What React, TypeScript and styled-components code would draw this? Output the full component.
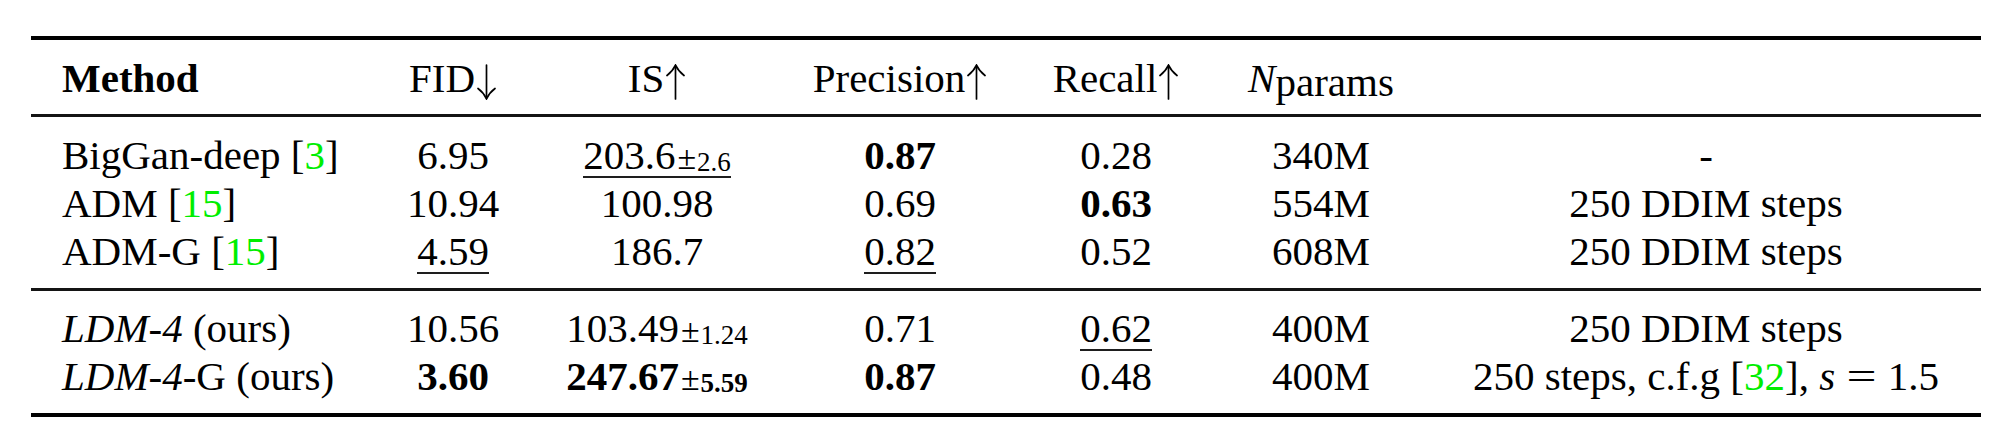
import React from 'react';
import styled, { createGlobalStyle } from 'styled-components';

const COLUMNS = '340px 164px 244px 242px 190px 220px 550px';
const SERIF = "'Liberation Serif', 'Times New Roman', Tinos, 'DejaVu Serif', serif";

const GlobalStyle = createGlobalStyle`
  html, body {
    margin: 0;
    padding: 0;
    background: #ffffff;
  }
  body {
    font-family: ${SERIF};
    color: #000000;
  }
`;

const Page = styled.div`
  padding: 36px 0 0 31px;
`;

const Table = styled.div`
  width: 1950px;
  display: flex;
  flex-direction: column;
  font-family: ${SERIF};
  color: #000000;
`;

const Rule = styled.div<{ $heavy?: boolean }>`
  height: ${(p) => (p.$heavy ? 4 : 3)}px;
  background: ${(p) => (p.$heavy ? '#000000' : '#141414')};
`;

const Group = styled.div<{ $top: number; $bottom: number }>`
  padding: ${(p) => p.$top}px 0 ${(p) => p.$bottom}px;
`;

const Row = styled.div`
  display: grid;
  grid-template-columns: ${COLUMNS};
  height: 48px;
  font-family: ${SERIF};
  font-size: 41px;
  line-height: 48px;
  white-space: nowrap;
`;

const Cell = styled.div<{ $left?: boolean }>`
  text-align: ${(p) => (p.$left ? 'left' : 'center')};
  padding-left: ${(p) => (p.$left ? 31 : 0)}px;
`;

const Bold = styled.span`
  font-weight: 700;
`;

const Italic = styled.span`
  font-style: italic;
`;

const Cite = styled.span`
  color: #00ee00;
`;

const ArrowSvg = styled.svg`
  display: inline-block;
  width: 21px;
  height: 36px;
  margin-left: 1px;
  vertical-align: -8px;
`;

const Sub = styled.span`
  display: inline-block;
  vertical-align: -4px;
  line-height: 1;
`;

const Marked = styled.span`
  display: inline-block;
  line-height: 41px;
  border-bottom: 2px solid #1e1e1e;
`;

const Spread = styled.span<{ $bold?: boolean }>`
  font-size: 27px;
  line-height: 1;
  vertical-align: -2px;
  font-weight: ${(p) => (p.$bold ? 700 : 400)};
`;

const PlusMinus = styled.span`
  display: inline-block;
  font-size: 34px;
  font-weight: 400;
  line-height: 1;
  margin: 0 1px 0 2px;
`;

const Equals = styled.span`
  display: inline-block;
  margin: 0 0.36em;
  transform: scaleX(1.3);
`;

// math-style arrow: thin stem, curved barbs
const Arrow: React.FC<{ down?: boolean }> = ({ down }) => (
  <ArrowSvg viewBox="0 0 21 36" aria-hidden>
    <g
      transform={down ? 'rotate(180 10.5 18)' : undefined}
      fill="none"
      stroke="#000"
      strokeWidth="1.7"
      strokeLinecap="round"
    >
      <line x1="10.5" y1="2" x2="10.5" y2="35" />
      <path d="M2 11.5 Q7.5 7.5 10.5 1.2 Q13.5 7.5 19 11.5" />
    </g>
  </ArrowSvg>
);

const pm = (value: string, bold = false) => (
  <>
    <PlusMinus>±</PlusMinus>
    <Spread $bold={bold}>{value}</Spread>
  </>
);

type Line = React.ReactNode[];

const header: Line = [
  <Bold>Method</Bold>,
  <>FID<Arrow down /></>,
  <>IS<Arrow /></>,
  <>Precision<Arrow /></>,
  <>Recall<Arrow /></>,
  <>
    <Italic>N</Italic>
    <Sub>params</Sub>
  </>,
  null,
];

const baselines: Line[] = [
  [
    <>BigGan-deep [<Cite>3</Cite>]</>,
    '6.95',
    <Marked>203.6{pm('2.6')}</Marked>,
    <Bold>0.87</Bold>,
    '0.28',
    '340M',
    '-',
  ],
  [
    <>ADM [<Cite>15</Cite>]</>,
    '10.94',
    '100.98',
    '0.69',
    <Bold>0.63</Bold>,
    '554M',
    '250 DDIM steps',
  ],
  [
    <>ADM-G [<Cite>15</Cite>]</>,
    <Marked>4.59</Marked>,
    '186.7',
    <Marked>0.82</Marked>,
    '0.52',
    '608M',
    '250 DDIM steps',
  ],
];

const ours: Line[] = [
  [
    <><Italic>LDM-4</Italic> (ours)</>,
    '10.56',
    <>103.49{pm('1.24')}</>,
    '0.71',
    <Marked>0.62</Marked>,
    '400M',
    '250 DDIM steps',
  ],
  [
    <><Italic>LDM-4</Italic>-G (ours)</>,
    <Bold>3.60</Bold>,
    <><Bold>247.67</Bold>{pm('5.59', true)}</>,
    <Bold>0.87</Bold>,
    '0.48',
    '400M',
    <>
      250 steps, c.f.g [<Cite>32</Cite>], <Italic>s</Italic>
      <Equals>=</Equals>1.5
    </>,
  ],
];

const TableRow: React.FC<{ cells: Line }> = ({ cells }) => (
  <Row>
    {cells.map((cell, index) => (
      <Cell key={index} $left={index === 0}>
        {cell}
      </Cell>
    ))}
  </Row>
);

const App: React.FC = () => (
  <Page>
    <GlobalStyle />
    <Table>
      <Rule $heavy />
      <Group $top={14} $bottom={12}>
        <TableRow cells={header} />
      </Group>
      <Rule />
      <Group $top={14} $bottom={13}>
        {baselines.map((cells, index) => (
          <TableRow key={index} cells={cells} />
        ))}
      </Group>
      <Rule />
      <Group $top={13} $bottom={13}>
        {ours.map((cells, index) => (
          <TableRow key={index} cells={cells} />
        ))}
      </Group>
      <Rule $heavy />
    </Table>
  </Page>
);

export default App;
